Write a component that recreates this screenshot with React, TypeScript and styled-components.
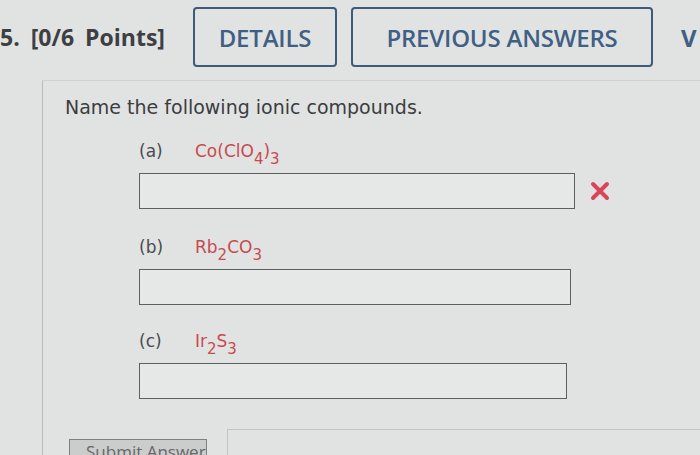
import React from 'react'
import styled, { createGlobalStyle } from 'styled-components'

const GlobalStyle = createGlobalStyle`
  html, body {
    margin: 0;
    padding: 0;
    background: #e1e3e2;
    overflow: hidden;
  }
  body {
    width: 700px;
    height: 455px;
    font-family: "DejaVu Sans", Verdana, sans-serif;
  }
`

const Page = styled.div`
  width: 700px;
  height: 455px;
  overflow: hidden;
  display: flex;
  flex-direction: column;
`

const Header = styled.div`
  display: flex;
  flex-shrink: 0;
  align-items: center;
  height: 74px;
  white-space: nowrap;
`

const Points = styled.div`
  font-family: "Open Sans", sans-serif;
  font-weight: 700;
  font-size: 23px;
  color: #3d3f42;
  word-spacing: 5px;
  width: 193px;
`

const TabButton = styled.div<{ $width: number }>`
  box-sizing: border-box;
  width: ${(p) => p.$width}px;
  height: 60px;
  margin-right: 14px;
  border: 2px solid #3e5b7c;
  border-radius: 4px;
  display: flex;
  align-items: center;
  justify-content: center;
  font-family: "Open Sans", sans-serif;
  font-weight: 600;
  font-size: 24px;
  color: #3f5f85;
  letter-spacing: -0.2px;
`

const Cut = styled.div`
  font-family: "Open Sans", sans-serif;
  font-weight: 700;
  font-size: 24px;
  color: #3f5f85;
  margin-left: 14px;
`

const Panel = styled.div`
  flex-shrink: 0;
  margin-left: 42px;
  margin-top: 6px;
  border-left: 1px solid #b9bcbc;
  border-top: 1px solid #d0d2d2;
  padding: 15px 0 0 22px;
  color: #383a3c;
`

const Prompt = styled.div`
  font-size: 19px;
  color: #3b3d40;
  margin-bottom: 23px;
`

const Part = styled.div<{ $gap: number }>`
  margin-left: 74px;
  margin-bottom: ${(p) => p.$gap}px;
`

const PartLabel = styled.div`
  display: flex;
  align-items: baseline;
  font-size: 17px;
  height: 26px;
  margin-bottom: 6px;
`

const Letter = styled.span`
  color: #4a4c4f;
  width: 56px;
`

const Formula = styled.span`
  color: #c84a50;
  font-size: 17px;
  sub {
    font-size: 15px;
    vertical-align: -7px;
    line-height: 0;
  }
`

const AnswerRow = styled.div`
  display: flex;
  align-items: center;
  gap: 14px;
`

const Answer = styled.div<{ $width: number }>`
  box-sizing: border-box;
  width: ${(p) => p.$width}px;
  height: 36px;
  border: 1.5px solid #5d6062;
  background: #e6e8e7;
`

const Footer = styled.div`
  display: flex;
  align-items: flex-start;
  margin-left: 4px;
  gap: 20px;
`

const SubmitButton = styled.div`
  box-sizing: border-box;
  width: 138px;
  height: 30px;
  margin-top: 10px;
  background: #cbcdcd;
  border: 1.5px solid #7d8080;
  font-family: "Open Sans", sans-serif;
  font-size: 17px;
  color: #666;
  padding: 0 0 0 16px;
  overflow: hidden;
  white-space: nowrap;
`

const SideBox = styled.div`
  flex: 1;
  height: 40px;
  border: 1px solid #c2c5c5;
  border-right: none;
`

function WrongMark() {
  return (
    <svg width="22" height="22" viewBox="0 0 22 22">
      <path d="M4 4 L18 18 M18 4 L4 18" stroke="#d9465a" strokeWidth="4" strokeLinecap="round" />
    </svg>
  )
}

export default function App() {
  return (
    <Page>
      <GlobalStyle />
      <Header>
        <Points>5. [0/6 Points]</Points>
        <TabButton $width={144}>DETAILS</TabButton>
        <TabButton $width={302}>PREVIOUS ANSWERS</TabButton>
        <Cut>V</Cut>
      </Header>
      <Panel>
        <Prompt>Name the following ionic compounds.</Prompt>
        <Part $gap={28}>
          <PartLabel>
            <Letter>(a)</Letter>
            <Formula>
              Co(ClO<sub>4</sub>)<sub>3</sub>
            </Formula>
          </PartLabel>
          <AnswerRow>
            <Answer $width={436} />
            <WrongMark />
          </AnswerRow>
        </Part>
        <Part $gap={26}>
          <PartLabel>
            <Letter>(b)</Letter>
            <Formula>
              Rb<sub>2</sub>CO<sub>3</sub>
            </Formula>
          </PartLabel>
          <AnswerRow>
            <Answer $width={432} />
          </AnswerRow>
        </Part>
        <Part $gap={30}>
          <PartLabel>
            <Letter>(c)</Letter>
            <Formula>
              Ir<sub>2</sub>S<sub>3</sub>
            </Formula>
          </PartLabel>
          <AnswerRow>
            <Answer $width={428} />
          </AnswerRow>
        </Part>
        <Footer>
          <SubmitButton>Submit Answer</SubmitButton>
          <SideBox />
        </Footer>
      </Panel>
    </Page>
  )
}
